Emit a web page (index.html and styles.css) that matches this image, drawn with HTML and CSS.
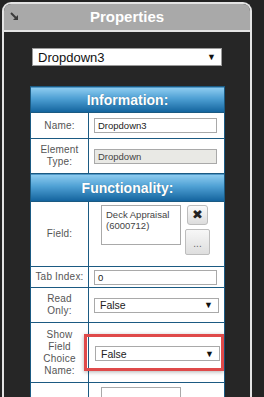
FILE: index.html
```html
<!DOCTYPE html>
<html lang="en">
<head>
    <meta charset="UTF-8">
    <title>Properties</title>
    <link rel="stylesheet" href="styles.css">
</head>
<body>
    <div class="panel">
        <div class="panel-head">
            <svg class="collapse-icon" width="9" height="9" viewBox="0 0 9 9">
                <path d="M1 1 L6 6" stroke="#3a3a3a" stroke-width="2"/>
                <path d="M8 3 L8 8 L3 8 Z" fill="#3a3a3a"/>
            </svg>
            <span class="panel-title">Properties</span>
        </div>
        <div class="panel-body">
            <div class="element-select">
                <span>Dropdown3</span>
                <span class="arrow">&#9660;</span>
            </div>

            <table class="props">
                <tr class="section"><th colspan="2">Information:</th></tr>
                <tr class="row-name">
                    <td class="label">Name:</td>
                    <td class="value"><div class="text-input">Dropdown3</div></td>
                </tr>
                <tr class="row-type">
                    <td class="label">Element<br>Type:</td>
                    <td class="value"><div class="text-input disabled">Dropdown</div></td>
                </tr>
                <tr class="section func"><th colspan="2">Functionality:</th></tr>
                <tr class="row-field">
                    <td class="label">Field:</td>
                    <td class="value">
                        <div class="field-pick">
                            <div class="field-list">Deck Appraisal<br>(6000712)</div>
                            <div class="field-buttons">
                                <div class="btn-clear">&#10006;</div>
                                <div class="btn-more">...</div>
                            </div>
                        </div>
                    </td>
                </tr>
                <tr class="row-tab">
                    <td class="label">Tab Index:</td>
                    <td class="value"><div class="text-input">0</div></td>
                </tr>
                <tr class="row-read">
                    <td class="label">Read<br>Only:</td>
                    <td class="value"><div class="select"><span>False</span><span class="arrow">&#9660;</span></div></td>
                </tr>
                <tr class="row-show">
                    <td class="label">Show<br>Field<br>Choice<br>Name:</td>
                    <td class="value">
                        <div class="highlight">
                            <div class="select"><span>False</span><span class="arrow">&#9660;</span></div>
                        </div>
                    </td>
                </tr>
                <tr class="row-next">
                    <td class="label"></td>
                    <td class="value"><div class="next-box"></div></td>
                </tr>
            </table>
        </div>
    </div>
</body>
</html>
```

FILE: styles.css
```css
* {
    margin: 0;
    padding: 0;
    box-sizing: border-box;
}

body {
    background: #232323;
    font-family: 'Liberation Sans', Arial, sans-serif;
    overflow: hidden;
}

.panel {
    margin-left: 2px;
    margin-top: 2px;
    width: 250px;
    height: 420px;
    border: 2px solid #e4e4e4;
    border-bottom: none;
    border-radius: 9px 9px 0 0;
    background: #262626;
}

.panel-head {
    position: relative;
    height: 28px;
    background: #a9a9a9;
    border-bottom: 2px solid #e4e4e4;
    border-radius: 7px 7px 0 0;
    text-align: center;
}

.collapse-icon {
    position: absolute;
    left: 6px;
    top: 8px;
}

.panel-title {
    color: #fff;
    font-weight: bold;
    font-size: 15px;
    line-height: 26px;
}

.panel-body {
    padding: 16px 0 0 28px;
}

.element-select {
    width: 190px;
    height: 18px;
    background: #fff;
    border: 1px solid #9a9a9a;
    display: flex;
    justify-content: space-between;
    align-items: center;
    padding: 0 5px 0 5px;
    font-size: 13px;
    color: #111;
}

.arrow {
    font-size: 9px;
    color: #111;
}

.props {
    margin-top: 20px;
    margin-left: -2px;
    width: 195px;
    border-collapse: collapse;
    background: #fff;
}

.props td,
.props th {
    border: 1px solid #1b5a82;
}

.section th {
    height: 26px;
    background: linear-gradient(to bottom, #8fcdf1 0%, #4d9fd3 45%, #12629c 100%);
    color: #fff;
    font-size: 14px;
    font-weight: bold;
    text-shadow: 0 0 1px rgba(0,0,0,0.3);
}

.section.func th {
    height: 28px;
}

.label {
    width: 60px;
    text-align: center;
    color: #555;
    font-size: 10px;
    line-height: 12px;
    letter-spacing: 0.2px;
}

.value {
    padding-left: 5px;
}

.row-name td { height: 26px; }
.row-type td { height: 35px; }
.row-field td { height: 65px; }
.row-tab td { height: 21px; }
.row-read td { height: 35px; }
.row-show td { height: 60px; }
.row-next td { height: 30px; vertical-align: top; }

.text-input {
    width: 123px;
    height: 15px;
    border: 1px solid #a9a9a9;
    background: #fff;
    font-size: 9.5px;
    line-height: 13px;
    padding-left: 3px;
    color: #222;
}

.text-input.disabled {
    background: #e9e9e5;
    color: #444;
}

.select {
    width: 125px;
    height: 15px;
    border: 1px solid #a9a9a9;
    background: #fff;
    display: flex;
    justify-content: space-between;
    align-items: center;
    padding: 0 5px 0 5px;
    font-size: 10.5px;
    color: #222;
}

.field-pick {
    display: flex;
    align-items: flex-start;
    gap: 4px;
    padding-left: 7px;
    margin-top: -8px;
}

.field-list {
    width: 80px;
    height: 40px;
    border: 1px solid #a9a9a9;
    font-size: 9.5px;
    line-height: 11px;
    color: #444;
    padding: 3px 0 0 4px;
}

.field-buttons {
    display: flex;
    flex-direction: column;
    align-items: center;
    gap: 4px;
}

.btn-clear {
    width: 21px;
    height: 20px;
    border: 1px solid #bdbdbd;
    border-radius: 3px;
    background: linear-gradient(to bottom, #fbfbfb, #dcdcdc);
    font-size: 13px;
    line-height: 18px;
    text-align: center;
    color: #222;
}

.btn-more {
    width: 25px;
    height: 26px;
    border: 1px solid #bdbdbd;
    border-radius: 2px;
    background: linear-gradient(to bottom, #f7f7f7, #dedede);
    font-size: 10px;
    line-height: 28px;
    text-align: center;
    color: #666;
}

.highlight {
    position: relative;
    margin-left: -10px;
    width: 140px;
    padding: 9px 0 7px 8px;
    border: 3px solid #df4a4a;
    box-shadow: 0 1px 4px rgba(0,0,0,0.3);
}

.next-box {
    margin: 4px 0 0 7px;
    width: 80px;
    height: 20px;
    border: 1px solid #a9a9a9;
}
```
